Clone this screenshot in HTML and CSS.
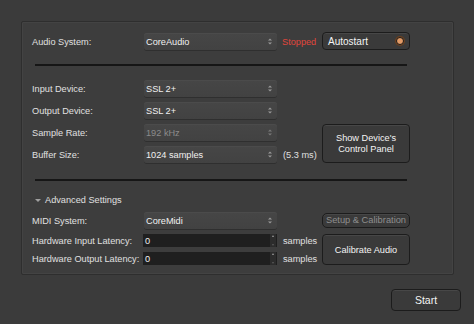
FILE: index.html
```html
<!DOCTYPE html>
<html>
<head>
<meta charset="utf-8">
<link rel="stylesheet" href="styles.css">
</head>
<body>
<div class="panel">
  <div class="grid">
    <div class="label r1">Audio System:</div>
    <div class="select r1"><span>CoreAudio</span><svg class="step" width="6" height="9" viewBox="0 0 6 9"><path d="M1 3.5 L3 1.5 L5 3.5 Z M1 5.5 L3 7.5 L5 5.5 Z" fill="#9a9a9a"/></svg></div>
    <div class="status r1">Stopped</div>
    <div class="btn autostart r1"><span>Autostart</span><span class="dot"></span></div>

    <div class="sep r2"></div>

    <div class="label r3">Input Device:</div>
    <div class="select r3"><span>SSL 2+</span><svg class="step" width="6" height="9" viewBox="0 0 6 9"><path d="M1 3.5 L3 1.5 L5 3.5 Z M1 5.5 L3 7.5 L5 5.5 Z" fill="#9a9a9a"/></svg></div>

    <div class="label r4">Output Device:</div>
    <div class="select r4"><span>SSL 2+</span><svg class="step" width="6" height="9" viewBox="0 0 6 9"><path d="M1 3.5 L3 1.5 L5 3.5 Z M1 5.5 L3 7.5 L5 5.5 Z" fill="#9a9a9a"/></svg></div>

    <div class="label r5">Sample Rate:</div>
    <div class="select r5 disabled"><span>192 kHz</span><svg class="step" width="6" height="9" viewBox="0 0 6 9"><path d="M1 3.5 L3 1.5 L5 3.5 Z M1 5.5 L3 7.5 L5 5.5 Z" fill="#7a7a7a"/></svg></div>
    <div class="btn tall r5-6">Show Device's<br>Control Panel</div>

    <div class="label r6">Buffer Size:</div>
    <div class="select r6"><span>1024 samples</span><svg class="step" width="6" height="9" viewBox="0 0 6 9"><path d="M1 3.5 L3 1.5 L5 3.5 Z M1 5.5 L3 7.5 L5 5.5 Z" fill="#9a9a9a"/></svg></div>
    <div class="aside r6">(5.3 ms)</div>

    <div class="sep r7"></div>

    <div class="adv r8"><span class="tri"></span>Advanced Settings</div>

    <div class="label r9">MIDI System:</div>
    <div class="select r9"><span>CoreMidi</span><svg class="step" width="6" height="9" viewBox="0 0 6 9"><path d="M1 3.5 L3 1.5 L5 3.5 Z M1 5.5 L3 7.5 L5 5.5 Z" fill="#9a9a9a"/></svg></div>
    <div class="btn small r9">Setup &amp; Calibration</div>

    <div class="label r10">Hardware Input Latency:</div>
    <div class="field r10"><span>0</span><span class="spin"><i></i><i class="dn"></i></span></div>
    <div class="aside r10">samples</div>
    <div class="btn tall r10-11">Calibrate Audio</div>

    <div class="label r11">Hardware Output Latency:</div>
    <div class="field r11"><span>0</span><span class="spin"><i></i><i class="dn"></i></span></div>
    <div class="aside r11">samples</div>
  </div>
</div>
<div class="footer">
  <div class="btn start">Start</div>
</div>
</body>
</html>
```
FILE: styles.css
```css
html, body {
  margin: 0;
  padding: 0;
}
body {
  width: 474px;
  height: 324px;
  background: #3b3b3b;
  font-family: "Liberation Sans", Arial, sans-serif;
  font-size: 9.2px;
  color: #e6e6e6;
  overflow: hidden;
}
.panel {
  margin: 21px 0 0 21px;
  width: 431px;
  height: 252px;
  border: 1px solid #2e2e2e;
  box-shadow: inset 0 0 0 1px #434343;
  background: #3d3d3d;
  box-sizing: content-box;
  border-radius: 2px;
}
.grid {
  display: grid;
  grid-template-columns: 112px 133px 45px 88px;
  grid-template-rows: 17px 20px 17px 17px 17px 17px 20px 14px 17px 13px 13px;
  row-gap: 5px;
  padding: 11px 0 0 10px;
}
.r1 { grid-row: 1; }
.r2 { grid-row: 2; }
.r3 { grid-row: 3; }
.r4 { grid-row: 4; }
.r5 { grid-row: 5; }
.r6 { grid-row: 6; }
.r7 { grid-row: 7; }
.r8 { grid-row: 8; }
.r9 { grid-row: 9; }
.r10 { grid-row: 10; }
.r11 { grid-row: 11; }
.r5-6 { grid-row: 5 / 7; }
.r10-11 { grid-row: 10 / 12; }

.label {
  grid-column: 1;
  display: flex;
  align-items: center;
  color: #e0e0e0;
  white-space: nowrap;
}
.select {
  grid-column: 2;
  display: flex;
  align-items: center;
  justify-content: space-between;
  padding: 0 4px 0 2px;
  background: linear-gradient(#464646, #424242);
  border-radius: 3px;
  box-shadow: 0 1px 0 #2f2f2f, inset 0 1px 0 #4b4b4b;
  color: #f0f0f0;
}
.select.disabled { color: #8c8c8c; }
.step { display: block; }
.status {
  grid-column: 3;
  display: flex;
  align-items: center;
  padding-left: 5px;
  color: #e0463c;
}
.aside {
  grid-column: 3;
  display: flex;
  align-items: center;
  padding-left: 6px;
  color: #e0e0e0;
}
.btn {
  grid-column: 4;
  display: flex;
  align-items: center;
  justify-content: center;
  text-align: center;
  background: #3a3a3a;
  border: 1px solid #1c1c1c;
  border-radius: 4px;
  box-shadow: inset 0 1px 0 #474747;
  color: #f4f4f4;
  box-sizing: border-box;
  line-height: 11px;
}
.autostart {
  justify-content: space-between;
  padding: 0 5px 0 5px;
  height: 18px;
  align-self: start;
  margin-top: -1px;
  font-size: 10px;
}
.dot {
  width: 6px;
  height: 6px;
  border-radius: 50%;
  background: #e29a66;
  border: 1px solid #1a1a1a;
  box-shadow: 0 0 0 1px #6a4020;
}
.tall { padding-top: 1px; }
.small {
  height: 15px;
  align-self: center;
  color: #8e8e8e;
  font-size: 9.3px;
  border-radius: 5px;
}
.sep {
  grid-column: 1 / 5;
  margin: 0 3px;
  padding-top: 9px;
}
.sep::before {
  content: "";
  display: block;
  height: 2px;
  background: #161616;
}
.r7.sep { padding-top: 11px; }
.adv {
  grid-column: 1 / 4;
  display: flex;
  align-items: center;
  padding-left: 3px;
  color: #e0e0e0;
}
.tri {
  width: 0;
  height: 0;
  border-left: 3px solid transparent;
  border-right: 3px solid transparent;
  border-top: 3.5px solid #a0a0a0;
  margin-right: 4px;
}
.field {
  grid-column: 2;
  margin-left: -1px;
  display: flex;
  align-items: center;
  justify-content: space-between;
  background: #1f1f1f;
  padding-left: 2px;
  color: #f0f0f0;
}
.spin {
  display: flex;
  flex-direction: column;
  align-items: center;
  justify-content: space-between;
  width: 6px;
  height: 13px;
  margin-right: 1px;
  background: #2c2c2c;
  box-sizing: border-box;
  padding: 1px 0;
}
.spin i {
  display: block;
  width: 0;
  height: 0;
  border-left: 1.5px solid transparent;
  border-right: 1.5px solid transparent;
  border-bottom: 2px solid #9a9a9a;
}
.spin i.dn {
  border-bottom: 0;
  border-top: 2px solid #5a5a5a;
}
.footer {
  display: flex;
  justify-content: flex-end;
  padding: 14px 13px 0 0;
}
.start {
  width: 70px;
  height: 22px;
  font-size: 10.5px;
}
```
